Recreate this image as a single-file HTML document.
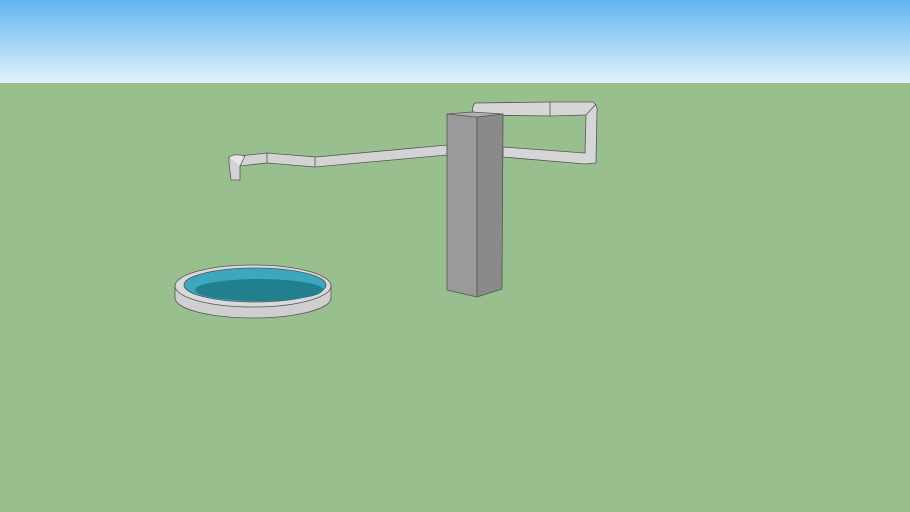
<!DOCTYPE html>
<html><head><style>
html,body{margin:0;padding:0;width:910px;height:512px;overflow:hidden}
body{background:#99bf8f}
#sky{position:absolute;left:0;top:0;width:910px;height:83px;background:linear-gradient(#62b5ef,#e2f1fa)}
svg{position:absolute;left:0;top:0}
</style></head><body>
<div id="sky"></div>
<svg width="910" height="512" viewBox="0 0 910 512">
<g stroke="#555" stroke-width="0.8" stroke-linejoin="round">
<path d="M175,286 L175,298 A78,20 0 0 0 331,298 L331,286 Z" fill="#cfcfcf"/>
<ellipse cx="253" cy="286" rx="78" ry="21" fill="#d9d9d9"/>
<ellipse cx="255" cy="285" rx="71" ry="17" fill="#3ba8bf"/>
<ellipse cx="259" cy="290" rx="64" ry="11" fill="#217f8e" stroke="none"/>
<path d="M229,157 L267,153 L316,157 L447,145 L447,155 L315,167 L267,163 L240,166 L240,180 L231,180 L229,163 Z" fill="#d3d3d3"/>
<path d="M229,157 Q235,153 245,156 L240,166" fill="#e6e6e6"/>
<path d="M267,153 L267,163 M315,157 L315,167" fill="none"/>
<path d="M475,103 L550,102 L593,102 Q598,106 597,112 L596,163 L585,164 L503,157 L503,147 L585,153 L586,115 L550,116 L475,115 Q470,109 475,103 Z" fill="#d6d6d6"/>
<path d="M550,102 L550,116 M586,115 L596,104" fill="none"/>
<path d="M447,114 L477,117 L477,297 L447,290 Z" fill="#9a9a9a"/>
<path d="M477,117 L503,114 L502,289 L477,297 Z" fill="#8a8a8a"/>
<path d="M447,114 L472,112 L503,114 L477,117 Z" fill="#b0b0b0"/>
</g>
</svg>
</body></html>
